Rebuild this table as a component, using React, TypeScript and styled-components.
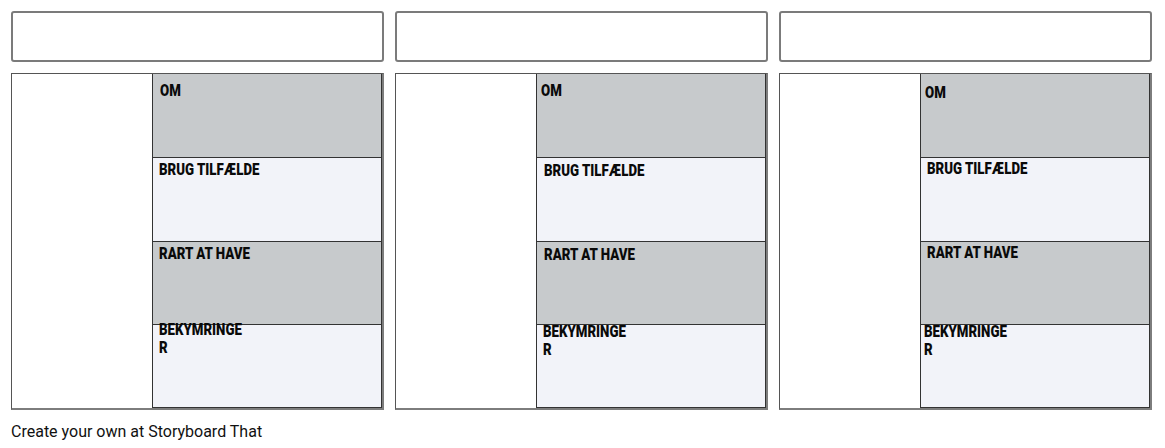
import React from 'react';
import styled, { createGlobalStyle } from 'styled-components';

const GlobalStyle = createGlobalStyle`
  body {
    margin: 0;
    background: #ffffff;
    font-family: Roboto, "Liberation Sans", sans-serif;
  }
`;

const Page = styled.div`
  width: 1165px;
  height: 448px;
  padding: 11px 0 0 11px;
  box-sizing: border-box;
`;

const Board = styled.div`
  display: grid;
  grid-template-columns: repeat(3, 373px);
  column-gap: 11px;
`;

const Column = styled.div`
  display: flex;
  flex-direction: column;
  gap: 11px;
`;

const TitleBox = styled.div`
  height: 51px;
  box-sizing: border-box;
  border: 2px solid #7b7b7b;
  border-radius: 3px;
  background: #ffffff;
`;

const Cell = styled.div`
  height: 337px;
  box-sizing: border-box;
  display: grid;
  grid-template-columns: 140px 1fr;
  border-top: 1px solid #555;
  border-left: 1px solid #555;
  border-right: 2px solid #7d7d7d;
  border-bottom: 2px solid #7d7d7d;
  background: #ffffff;
`;

const Picture = styled.div`
  background: #ffffff;
`;

const Rows = styled.div`
  display: grid;
  grid-template-rows: repeat(4, 1fr);
  border-left: 1px solid #333;
  border-right: 1px solid #333;
  border-bottom: 1px solid #333;
`;

const Row = styled.div<{ $shade: boolean; $first: boolean }>`
  background: ${(p) => (p.$shade ? '#c7cacc' : '#f2f3f9')};
  border-top: ${(p) => (p.$first ? 'none' : '1px solid #333')};
  padding: 0 0 0 6px;
  min-height: 0;
`;

const Label = styled.div<{ $top: number; $indent: number }>`
  margin-top: ${(p) => p.$top}px;
  margin-left: ${(p) => p.$indent}px;
  font-family: Roboto, "Liberation Sans", sans-serif;
  font-weight: 900;
  font-size: 17px;
  line-height: 18px;
  color: #0a0a0a;
  white-space: pre;
  transform: scaleX(0.78);
  transform-origin: left top;
`;

const Footer = styled.div`
  margin-top: 13px;
  font-family: Roboto, "Liberation Sans", sans-serif;
  font-size: 16px;
  color: #111;
  line-height: 18px;
`;

const labels = ['OM', 'BRUG TILFÆLDE', 'RART AT HAVE', 'BEKYMRINGE\nR'];

const offsets = [
  [[7, 1], [2, 0], [2, -0], [-5, 0]],
  [[7, -2], [3, 1], [3, 1], [-3, 0]],
  [[9, -2], [1, 0], [1, 0], [-3, -3]],
];

export default function App() {
  return (
    <Page>
      <GlobalStyle />
      <Board>
        {[0, 1, 2].map((c) => (
          <Column key={c}>
            <TitleBox />
            <Cell>
              <Picture />
              <Rows>
                {labels.map((l, i) => (
                  <Row key={l} $shade={i % 2 === 0} $first={i === 0}>
                    <Label $top={offsets[c][i][0]} $indent={offsets[c][i][1]}>
                      {l}
                    </Label>
                  </Row>
                ))}
              </Rows>
            </Cell>
          </Column>
        ))}
      </Board>
      <Footer>Create your own at Storyboard That</Footer>
    </Page>
  );
}
